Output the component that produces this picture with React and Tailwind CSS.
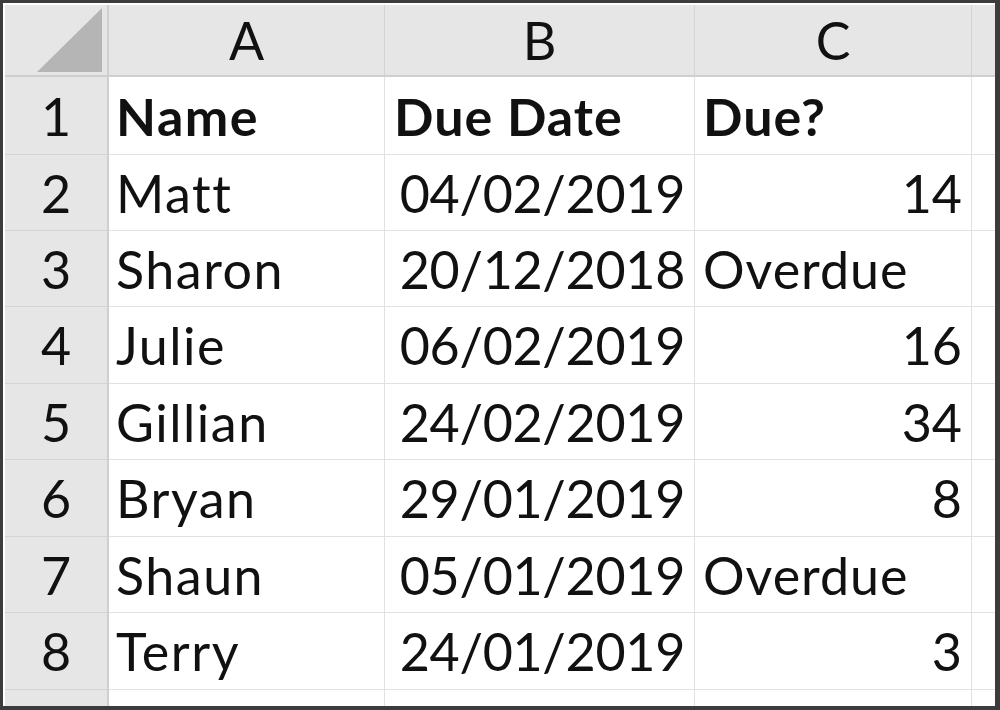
import React from "react";

const data = [
  { name: "Name", date: "Due Date", due: "Due?", head: true },
  { name: "Matt", date: "04/02/2019", due: "14" },
  { name: "Sharon", date: "20/12/2018", due: "Overdue" },
  { name: "Julie", date: "06/02/2019", due: "16" },
  { name: "Gillian", date: "24/02/2019", due: "34" },
  { name: "Bryan", date: "29/01/2019", due: "8" },
  { name: "Shaun", date: "05/01/2019", due: "Overdue" },
  { name: "Terry", date: "24/01/2019", due: "3" },
];

// row heights so the gridlines land where the sheet has them
const heights = ["h-[78px]", "h-[76px]", "h-[76px]", "h-[77px]", "h-[76px]", "h-[77px]", "h-[76px]", "h-[77px]"];

const cols = "grid grid-cols-[104px_276px_310px_277px_1fr]";

const Corner = () => (
  <div className="flex items-end justify-end pr-[5px] pb-[3px] bg-[#e6e6e6] border-r-2 border-r-[#cfcfcf] border-b-2 border-b-[#cfcfcf]">
    <svg width="65" height="64" viewBox="0 0 65 64">
      <polygon points="0,64 65,64 65,0" fill="#b5b5b5" />
    </svg>
  </div>
);

const App = () => {
  return (
    <div
      className="w-[1000px] h-[710px] bg-white border-l-[3px] border-t-[3px] border-r-[5px] border-b-4 border-[#3c3c3c] pl-[2px] pt-[2px] flex flex-col overflow-hidden text-[#111] text-[52px] leading-none"
      style={{ fontFamily: "Lato, 'Open Sans', sans-serif" }}
    >
      {/* column letters */}
      <div className={`${cols} h-[72px] shrink-0`}>
        <Corner />
        {["A", "B", "C"].map((l) => (
          <div
            key={l}
            className="flex items-center justify-center bg-[#e6e6e6] border-r border-r-[#d4d4d4] border-b-2 border-b-[#cfcfcf]"
          >
            {l}
          </div>
        ))}
        <div className="bg-[#e6e6e6] border-b-2 border-b-[#cfcfcf]"></div>
      </div>

      {data.map((r, i) => (
        <div key={i} className={`${cols} ${heights[i]} shrink-0`}>
          <div className="flex items-center justify-center bg-[#e6e6e6] border-r-2 border-r-[#cfcfcf] border-b border-b-[#d4d4d4]">
            {i + 1}
          </div>
          <div
            className={`flex items-center pl-[7px] tracking-[1.5px] border-r border-b border-[#e1e1e1] ${r.head ? "font-bold" : ""}`}
          >
            {r.name}
          </div>
          <div
            className={`flex items-center border-r border-b border-[#e1e1e1] ${
              r.head ? "font-bold pl-[9px] tracking-[1px]" : "justify-end pr-[9px] tracking-[-0.3px]"
            }`}
          >
            {r.date}
          </div>
          <div
            className={`flex items-center border-r border-b border-[#e1e1e1] ${
              r.head ? "font-bold pl-[8px] tracking-[1px]" : isNaN(r.due) ? "pl-[8px] tracking-[1px]" : "justify-end pr-[9px]"
            }`}
          >
            {r.due}
          </div>
          <div className="border-b border-[#e1e1e1]"></div>
        </div>
      ))}

      {/* partly visible next row */}
      <div className={`${cols} flex-1`}>
        <div className="bg-[#e6e6e6] border-r-2 border-r-[#cfcfcf]"></div>
        <div className="border-r border-[#e1e1e1]"></div>
        <div className="border-r border-[#e1e1e1]"></div>
        <div className="border-r border-[#e1e1e1]"></div>
        <div></div>
      </div>
    </div>
  );
};

export default App;
